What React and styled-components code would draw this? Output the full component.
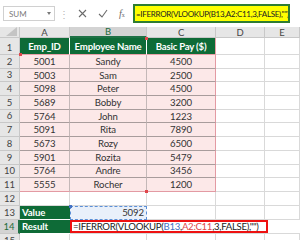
import React from 'react'
import styled, { createGlobalStyle } from 'styled-components'

const GlobalStyle = createGlobalStyle`
  * { box-sizing: border-box; }
  body {
    margin: 0;
    background: #ffffff;
    font-family: Lato, "Open Sans", sans-serif;
  }
`

const GREEN = '#0e6b37'
const PINK = '#fce8e8'
const GRID = '#d9d9d9'

const rows = [
    ['5001', 'Sandy', '4500'],
    ['5003', 'Sam', '2500'],
    ['5098', 'Peter', '4500'],
    ['5689', 'Bobby', '3200'],
    ['5764', 'John', '1223'],
    ['5091', 'Rita', '7890'],
    ['5673', 'Rozy', '6500'],
    ['5901', 'Rozita', '5479'],
    ['5764', 'Andre', '3456'],
    ['5555', 'Rocher', '1200'],
]

function App() {
    return (
        <Page>
            <GlobalStyle />
            <FormulaBar>
                <NameBox>
                    <span>SUM</span>
                    <Caret />
                </NameBox>
                <Dots>⋮</Dots>
                <BarIcons>
                    <svg width="9" height="9" viewBox="0 0 9 9">
                        <path d="M1 1L8 8M8 1L1 8" stroke="#6b6b6b" strokeWidth="1.1" fill="none" />
                    </svg>
                    <svg width="10" height="9" viewBox="0 0 10 9">
                        <path d="M1 5L4 8L9 1" stroke="#6b6b6b" strokeWidth="1.1" fill="none" />
                    </svg>
                    <Fx><i>f</i><sub>x</sub></Fx>
                </BarIcons>
                <FormulaInput>=IFERROR(VLOOKUP(B13,A2:C11,3,FALSE),"")</FormulaInput>
            </FormulaBar>
            <Sheet>
                <Corner>
                    <svg width="11" height="9" viewBox="0 0 11 9">
                        <path d="M11 0L11 9L0 9Z" fill="#c4c4c4" />
                    </svg>
                </Corner>
                <ColHead>A</ColHead>
                <ColHead $active>B</ColHead>
                <ColHead>C</ColHead>
                <ColHead>D</ColHead>
                <ColHead>E</ColHead>

                <RowHead>1</RowHead>
                <TableHead>Emp_ID</TableHead>
                <TableHead>Employee Name</TableHead>
                <TableHead $last>Basic Pay ($)</TableHead>
                <Empty />
                <Empty />

                {rows.map((r, i) => (
                    <React.Fragment key={i}>
                        <RowHead>{i + 2}</RowHead>
                        <TableCell $end={i === rows.length - 1}>{r[0]}</TableCell>
                        <TableCell $end={i === rows.length - 1}>{r[1]}</TableCell>
                        <TableCell $last $end={i === rows.length - 1}>{r[2]}</TableCell>
                        <Empty />
                        <Empty />
                    </React.Fragment>
                ))}

                <RowHead>12</RowHead>
                <Empty /><Empty /><Empty /><Empty /><Empty />

                <RowHead>13</RowHead>
                <Label>Value</Label>
                <ValueCell>5092</ValueCell>
                <Empty /><Empty /><Empty />

                <RowHead $active>14</RowHead>
                <Label>Result</Label>
                <ResultCell>
                    <ResultBox>
                        =IFERROR(VLOOKUP(<Ref $c="#4472c4">B13</Ref>,<Ref $c="#e0474c">A2:C11</Ref>,3,FALSE),"")
                    </ResultBox>
                </ResultCell>

                <RowHead>15</RowHead>
                <Empty /><Empty /><Empty /><Empty /><Empty />
            </Sheet>
            <Handle style={{ left: 19, top: 53 }} />
            <Handle style={{ left: 145, top: 37 }} />
            <Handle style={{ left: 145, top: 190 }} />
            <Handle style={{ left: 69, top: 205, background: '#4472c4' }} />
        </Page>
    )
}

export default App

const Page = styled.div`
    width: 300px;
    height: 240px;
    overflow: hidden;
    position: relative;
    background: #fff;
`

const FormulaBar = styled.div`
    height: 27px;
    display: flex;
    align-items: center;
    padding: 0 0 0 3px;
    background: #ffffff;
`

const NameBox = styled.div`
    width: 52px;
    height: 15px;
    border: 1px solid #d0d0d0;
    display: flex;
    align-items: center;
    justify-content: space-between;
    padding: 0 3px 0 5px;
    font-size: 8px;
    color: #7a7a7a;
`

const Caret = styled.span`
    width: 0;
    height: 0;
    border-left: 2.5px solid transparent;
    border-right: 2.5px solid transparent;
    border-top: 3px solid #7a7a7a;
`

const Dots = styled.div`
    width: 18px;
    text-align: center;
    font-size: 10px;
    color: #b5b5b5;
`

const BarIcons = styled.div`
    width: 57px;
    height: 17px;
    display: flex;
    align-items: center;
    gap: 11px;
    padding-left: 5px;
`

const Fx = styled.span`
    font-family: "Liberation Serif", serif;
    font-size: 10px;
    color: #6b6b6b;
    i { font-style: italic; }
    sub { font-size: 6px; vertical-align: baseline; }
`

const FormulaInput = styled.div`
    margin-left: 3px;
    width: 157px;
    height: 19px;
    background: #ffff00;
    border: 2px solid #2e7d32;
    display: flex;
    align-items: center;
    padding-left: 1px;
    font-size: 8px;
    letter-spacing: -0.3px;
    color: #222;
    white-space: nowrap;
    overflow: hidden;
`

const Sheet = styled.div`
    display: grid;
    grid-template-columns: 20px 50px 77px 69px 49px 1fr;
    grid-template-rows: 11px 17px repeat(10, 13.7px) 14px 14px 14px 14px;
    font-size: 9.6px;
    letter-spacing: -0.1px;
    color: #333;
`

const Corner = styled.div`
    background: #e6e6e6;
    border-right: 1px solid #c8c8c8;
    border-bottom: 1px solid #c8c8c8;
    display: flex;
    align-items: flex-end;
    justify-content: flex-end;
    padding: 0 2px 1px 0;
`

const ColHead = styled.div`
    background: ${p => (p.$active ? '#d3d3d3' : '#e6e6e6')};
    color: ${p => (p.$active ? '#1e6b3a' : '#444')};
    border-right: 1px solid #c8c8c8;
    border-bottom: ${p => (p.$active ? '2px solid #1e7145' : '1px solid #c8c8c8')};
    display: flex;
    align-items: center;
    justify-content: center;
    font-size: 9.5px;
`

const RowHead = styled.div`
    background: ${p => (p.$active ? '#d3d3d3' : '#e6e6e6')};
    color: ${p => (p.$active ? '#1e6b3a' : '#444')};
    border-right: ${p => (p.$active ? '2px solid #1e7145' : '1px solid #c8c8c8')};
    border-bottom: 1px solid #c8c8c8;
    display: flex;
    align-items: flex-end;
    justify-content: center;
    padding-bottom: 1px;
    font-size: 9.5px;
`

const Empty = styled.div`
    border-right: 1px solid ${GRID};
    border-bottom: 1px solid ${GRID};
`

const TableHead = styled.div`
    background: ${GREEN};
    color: #fff;
    font-weight: 700;
    letter-spacing: -0.2px;
    border-right: 1px solid ${p => (p.$last ? '#e8a0a8' : '#ffffff')};
    border-bottom: 1px solid #e8a0a8;
    display: flex;
    align-items: center;
    justify-content: center;
    white-space: nowrap;
`

const TableCell = styled.div`
    background: ${PINK};
    border-right: 1px solid ${p => (p.$last ? '#e39aa3' : '#c4b8b8')};
    border-bottom: 1px solid ${p => (p.$end ? '#e39aa3' : '#a89c9c')};
    display: flex;
    align-items: center;
    justify-content: center;
`

const Label = styled.div`
    background: ${GREEN};
    color: #fff;
    font-weight: 700;
    border-bottom: 1px solid #ffffff;
    display: flex;
    align-items: center;
    padding-left: 2px;
`

const ValueCell = styled.div`
    background: #e9f0fa;
    border: 1px dashed #5b8fd6;
    display: flex;
    align-items: center;
    justify-content: flex-end;
    padding-right: 2px;
`

const ResultCell = styled.div`
    grid-column: 3 / 7;
    display: flex;
    align-items: stretch;
    border-bottom: 1px solid ${GRID};
`

const ResultBox = styled.div`
    width: 198px;
    border: 2px solid #ee1111;
    display: flex;
    align-items: center;
    padding-left: 1px;
    white-space: nowrap;
    color: #222;
    font-size: 9.6px;
    letter-spacing: -0.3px;
    background: #fff;
`

const Ref = styled.span`
    color: ${p => p.$c};
`

const Handle = styled.div`
    position: absolute;
    width: 3px;
    height: 3px;
    background: #e0474c;
`
